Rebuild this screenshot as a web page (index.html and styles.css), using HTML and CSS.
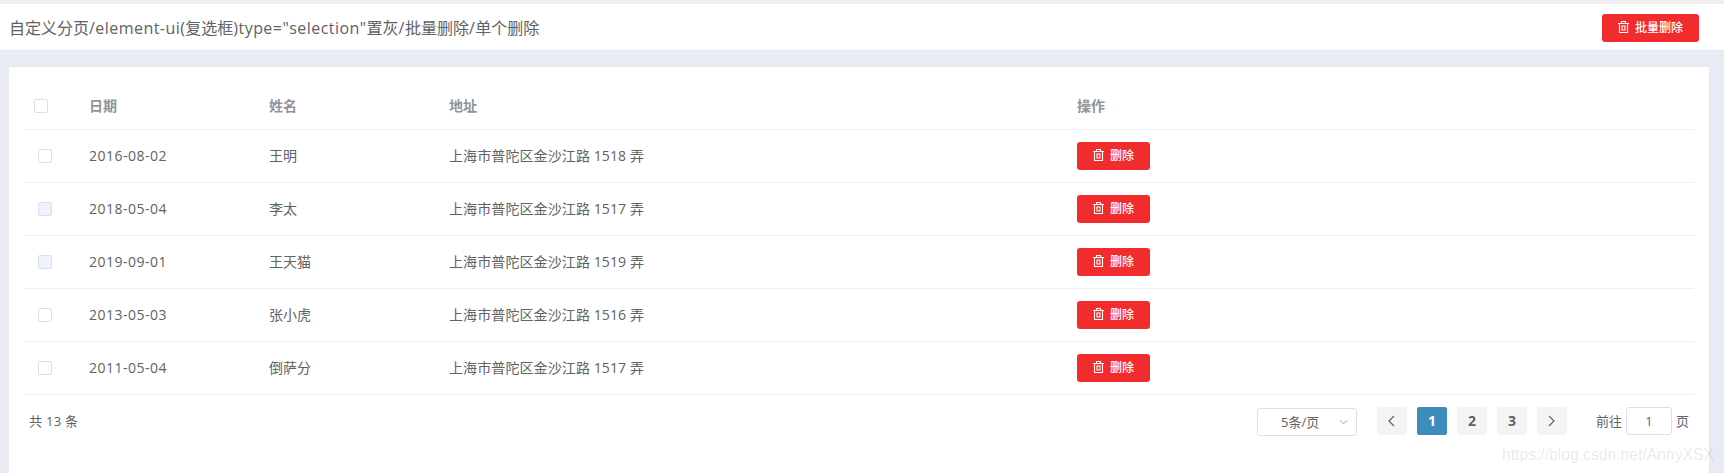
FILE: index.html
```html
<!DOCTYPE html>
<html lang="en">
<head>
    <meta charset="UTF-8">
    <meta name="viewport" content="width=device-width, initial-scale=1.0">
    <title>自定义分页</title>
    <link rel="stylesheet" href="styles.css">
</head>
<body>

    <!-- Header -->
    <div class="header">
        <div class="header-title">自定义分页<span class="latin">/element-ui(</span>复选框<span class="latin">)type="selection"</span>置灰<span class="latin">/</span>批量删除<span class="latin">/</span>单个删除</div>
        <button class="button button-batch">
            <svg class="icon" viewBox="0 0 11 12"><path d="M0 2.5H11M3.5 2.5V.5H7.5V2.5M1.5 2.5V11.5H9.5V2.5M4 5H7V9H4Z"/></svg>
            <span>批量删除</span>
        </button>
    </div>

    <!-- Main Container -->
    <div class="container">
        <table class="table">
            <colgroup>
                <col class="col-check">
                <col class="col-date">
                <col class="col-name">
                <col class="col-addr">
                <col>
            </colgroup>
            <thead>
                <tr>
                    <th class="cell-check-head"><span class="checkbox"></span></th>
                    <th>日期</th>
                    <th>姓名</th>
                    <th>地址</th>
                    <th>操作</th>
                </tr>
            </thead>
            <tbody>
                <tr>
                    <td class="cell-check"><span class="checkbox"></span></td>
                    <td class="cell-date">2016-08-02</td>
                    <td class="cell-text">王明</td>
                    <td class="cell-text cell-addr">上海市普陀区金沙江路 1518 弄</td>
                    <td><button class="button"><svg class="icon" viewBox="0 0 11 12"><path d="M0 2.5H11M3.5 2.5V.5H7.5V2.5M1.5 2.5V11.5H9.5V2.5M4 5H7V9H4Z"/></svg><span>删除</span></button></td>
                </tr>
                <tr>
                    <td class="cell-check"><span class="checkbox disabled"></span></td>
                    <td class="cell-date">2018-05-04</td>
                    <td class="cell-text">李太</td>
                    <td class="cell-text cell-addr">上海市普陀区金沙江路 1517 弄</td>
                    <td><button class="button"><svg class="icon" viewBox="0 0 11 12"><path d="M0 2.5H11M3.5 2.5V.5H7.5V2.5M1.5 2.5V11.5H9.5V2.5M4 5H7V9H4Z"/></svg><span>删除</span></button></td>
                </tr>
                <tr>
                    <td class="cell-check"><span class="checkbox disabled"></span></td>
                    <td class="cell-date">2019-09-01</td>
                    <td class="cell-text">王天猫</td>
                    <td class="cell-text cell-addr">上海市普陀区金沙江路 1519 弄</td>
                    <td><button class="button"><svg class="icon" viewBox="0 0 11 12"><path d="M0 2.5H11M3.5 2.5V.5H7.5V2.5M1.5 2.5V11.5H9.5V2.5M4 5H7V9H4Z"/></svg><span>删除</span></button></td>
                </tr>
                <tr>
                    <td class="cell-check"><span class="checkbox"></span></td>
                    <td class="cell-date">2013-05-03</td>
                    <td class="cell-text">张小虎</td>
                    <td class="cell-text cell-addr">上海市普陀区金沙江路 1516 弄</td>
                    <td><button class="button"><svg class="icon" viewBox="0 0 11 12"><path d="M0 2.5H11M3.5 2.5V.5H7.5V2.5M1.5 2.5V11.5H9.5V2.5M4 5H7V9H4Z"/></svg><span>删除</span></button></td>
                </tr>
                <tr>
                    <td class="cell-check"><span class="checkbox"></span></td>
                    <td class="cell-date">2011-05-04</td>
                    <td class="cell-text">倒萨分</td>
                    <td class="cell-text cell-addr">上海市普陀区金沙江路 1517 弄</td>
                    <td><button class="button"><svg class="icon" viewBox="0 0 11 12"><path d="M0 2.5H11M3.5 2.5V.5H7.5V2.5M1.5 2.5V11.5H9.5V2.5M4 5H7V9H4Z"/></svg><span>删除</span></button></td>
                </tr>
            </tbody>
        </table>

        <!-- Pagination -->
        <div class="pagination">
            <span class="total">共 13 条</span>
            <div class="pager">
                <div class="page-size">
                    <span>5条/页</span>
                    <svg class="caret" viewBox="0 0 10 6"><path d="M1 1L5 5L9 1"/></svg>
                </div>
                <div class="pages">
                    <span class="page-btn"><svg class="arrow" viewBox="0 0 7 12"><path d="M6 1L1 6L6 11"/></svg></span>
                    <span class="page-btn active">1</span>
                    <span class="page-btn">2</span>
                    <span class="page-btn">3</span>
                    <span class="page-btn"><svg class="arrow" viewBox="0 0 7 12"><path d="M1 1L6 6L1 11"/></svg></span>
                </div>
                <div class="jump">
                    <span>前往</span>
                    <span class="jump-input">1</span>
                    <span>页</span>
                </div>
            </div>
        </div>
    </div>

    <div class="watermark">https://blog.csdn.net/AnnyXSX</div>

</body>
</html>
```

FILE: styles.css
```css
/* General Styling */
* {
    margin: 0;
    padding: 0;
    box-sizing: border-box;
    font-family: "Open Sans", "Noto Sans CJK SC", sans-serif;
}

html, body {
    height: 473px;
    overflow: hidden;
}

body {
    background-color: #e8ebf3;
    border-top: 4px solid #eeeeee;
    color: #606266;
    position: relative;
}

/* Header */
.header {
    background: white;
    height: 47px;
    padding: 10px 25px 0 9px;
    border-bottom: 1px solid #e4e6ec;
    display: flex;
    justify-content: space-between;
}

.header-title {
    font-size: 16px;
    line-height: 28px;
    height: 28px;
}

.latin {
    letter-spacing: 0.45px;
}

.button {
    background-color: #f22c2c;
    color: white;
    border: none;
    border-radius: 3px;
    height: 28px;
    padding: 0 16px;
    font-size: 12px;
    font-weight: 500;
    line-height: 24px;
    display: inline-flex;
    align-items: center;
}

.icon {
    width: 11px;
    height: 12px;
    margin: 0 6px 2px 0;
    fill: none;
    stroke: white;
    stroke-width: 1.1;
}

/* Main Content */
.container {
    background: white;
    margin: 16px 15px 0 9px;
    padding: 14px 15px 0;
    height: 420px;
}

.table {
    width: 1670px;
    border-collapse: collapse;
    table-layout: fixed;
    font-size: 14px;
}

.col-check { width: 55px; }
.col-date { width: 180px; }
.col-name { width: 180px; }
.col-addr { width: 628px; }

.table th,
.table td {
    height: 53px;
    padding: 0 10px;
    text-align: left;
    border-bottom: 1px solid #ebeef5;
}

.table th {
    height: 48px;
    color: #909399;
    font-weight: bold;
}

.table th.cell-check-head {
    padding: 2px 0 0 10px;
}

.table td.cell-check { padding-left: 14px; }

.table td.cell-date { letter-spacing: 0.5px; }

.table td.cell-text { padding-bottom: 2px; }

.table td.cell-addr { letter-spacing: 0.1px; }

.checkbox {
    display: block;
    width: 14px;
    height: 14px;
    border: 1px solid #dcdfe6;
    border-radius: 2px;
    background: white;
}

.checkbox.disabled {
    background: #edf2fc;
}

/* Pagination */
.pagination {
    display: flex;
    justify-content: space-between;
    padding: 12px 5px 0;
    font-size: 13px;
}

.total {
    line-height: 28px;
    letter-spacing: 0.3px;
}

.pager {
    display: flex;
}

.page-size {
    width: 100px;
    height: 28px;
    margin: 1px 20px 0 0;
    border: 1px solid #dcdfe6;
    border-radius: 3px;
    padding: 0 8px 0 23px;
    display: flex;
    align-items: center;
    justify-content: space-between;
}

.caret {
    width: 9px;
    height: 6px;
    fill: none;
    stroke: #909399;
    stroke-width: 1;
}

.pages {
    display: flex;
    gap: 10px;
}

.page-btn {
    width: 30px;
    height: 28px;
    background: #f4f4f5;
    border-radius: 2px;
    font-weight: bold;
    font-size: 14px;
    display: flex;
    align-items: center;
    justify-content: center;
}

.page-btn.active {
    background: #3c8dbc;
    color: white;
}

.arrow {
    width: 7px;
    height: 12px;
    fill: none;
    stroke: #606266;
    stroke-width: 1.2;
}

.jump {
    display: flex;
    align-items: center;
    gap: 4px;
    margin-left: 29px;
    height: 28px;
}

.jump-input {
    width: 46px;
    height: 28px;
    border: 1px solid #dcdfe6;
    border-radius: 3px;
    line-height: 26px;
    text-align: center;
}

.watermark {
    position: absolute;
    left: 1502px;
    top: 442px;
    font-family: "Liberation Sans", sans-serif;
    font-size: 15.7px;
    color: rgba(0, 0, 0, 0.1);
}
```
